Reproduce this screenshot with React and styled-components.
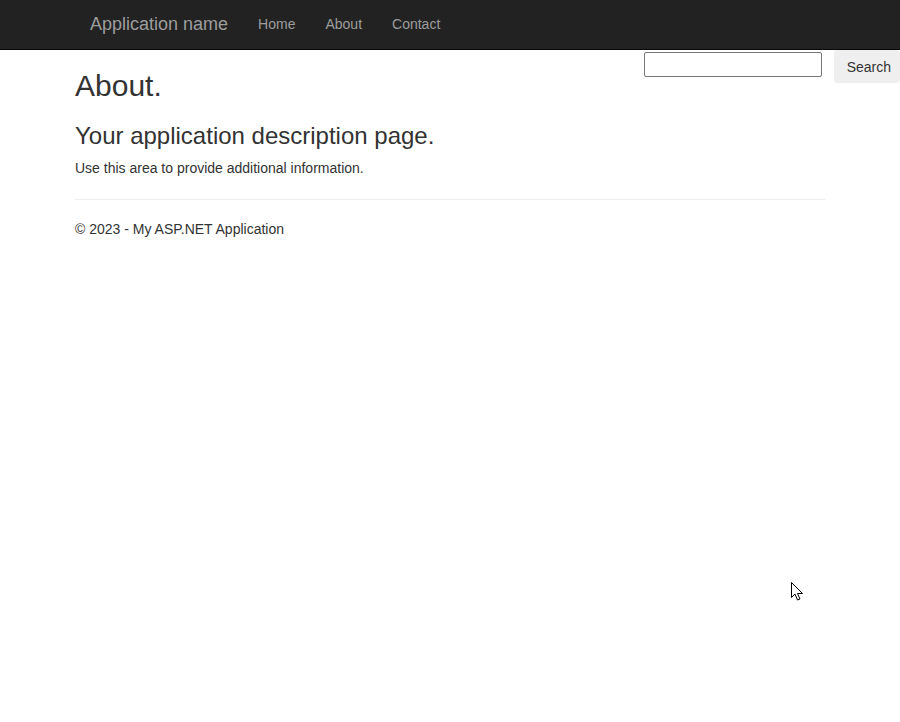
import React from "react";
import styled, {createGlobalStyle} from "styled-components";

const GlobalStyle = createGlobalStyle`
    html, body {
        margin: 0;
        padding: 0;
        overflow: hidden;
    }
    body {
        font-family: "Liberation Sans", Arial, Helvetica, sans-serif;
        font-size: 14px;
        line-height: 1.42857;
        color: #333;
        background: #fff;
    }
    * { box-sizing: border-box; }
`;

const Page = styled.div`
    position: relative;
    min-height: 722px;
    width: 900px;
`;

const NavBar = styled.nav`
    height: 50px;
    background-color: #222;
    border-bottom: 1px solid #080808;
`;

const NavInner = styled.div`
    width: 750px;
    margin: 0 auto;
    display: flex;
    align-items: center;
`;

const Brand = styled.a`
    display: block;
    padding: 14px 15px 16px;
    height: 50px;
    font-size: 18px;
    line-height: 20px;
    color: #9d9d9d;
    text-decoration: none;
`;

const NavList = styled.ul`
    display: flex;
    list-style: none;
    margin: 0;
    padding: 0;
`;

const NavLink = styled.a`
    display: block;
    padding: 14px 15px 16px;
    line-height: 20px;
    color: #9d9d9d;
    text-decoration: none;
`;

const SearchForm = styled.form`
    float: right;
    display: flex;
    align-items: flex-start;
    gap: 12px;
    margin: 0;
`;

const SearchInput = styled.input`
    width: 178px;
    height: 25px;
    margin-top: 2px;
    border: 1px solid #767676;
    border-radius: 2px;
    padding: 1px 2px;
    font-family: inherit;
`;

const SearchButton = styled.button`
    height: 33px;
    padding: 6px 8px 6px 12px;
    border: 1px solid transparent;
    border-radius: 4px;
    background: #efefef;
    font-family: inherit;
    font-size: 14px;
    color: #333;
`;

const Container = styled.div`
    width: 750px;
    margin: 0 auto;
`;

const Title = styled.h2`
    margin: 19px 0 10px;
    font-size: 30px;
    font-weight: 500;
    line-height: 1.1;
`;

const SubTitle = styled.h3`
    margin: 21px 0 10px;
    font-size: 24px;
    font-weight: 500;
    line-height: 1.1;
`;

const Text = styled.p`
    margin: 0 0 10px;
`;

const Rule = styled.hr`
    margin: 20px 0;
    border: 0;
    border-top: 1px solid #eee;
`;

const Cursor = styled.svg`
    position: absolute;
    left: 791px;
    top: 582px;
`;

export default function App() {
    return <>
        <GlobalStyle/>
        <Page>
            <NavBar>
                <NavInner>
                    <Brand href="#">Application name</Brand>
                    <NavList>
                        <li><NavLink href="#">Home</NavLink></li>
                        <li><NavLink href="#">About</NavLink></li>
                        <li><NavLink href="#">Contact</NavLink></li>
                    </NavList>
                </NavInner>
            </NavBar>

            <SearchForm onSubmit={e => e.preventDefault()}>
                <SearchInput type="text"/>
                <SearchButton type="submit">Search</SearchButton>
            </SearchForm>

            <Container>
                <Title>About.</Title>
                <SubTitle>Your application description page.</SubTitle>
                <Text>Use this area to provide additional information.</Text>
                <Rule/>
                <footer>
                    <Text>&copy; 2023 - My ASP.NET Application</Text>
                </footer>
            </Container>

            <Cursor width="13" height="20" viewBox="0 0 13 20">
                <path d="M0.5 0.5 L0.5 15.5 L4 12 L6.5 18 L9 17 L6.5 11.5 L11.5 11.5 Z"
                      fill="#fff" stroke="#000" strokeWidth="1" strokeLinejoin="miter"/>
            </Cursor>
        </Page>
    </>;
}
